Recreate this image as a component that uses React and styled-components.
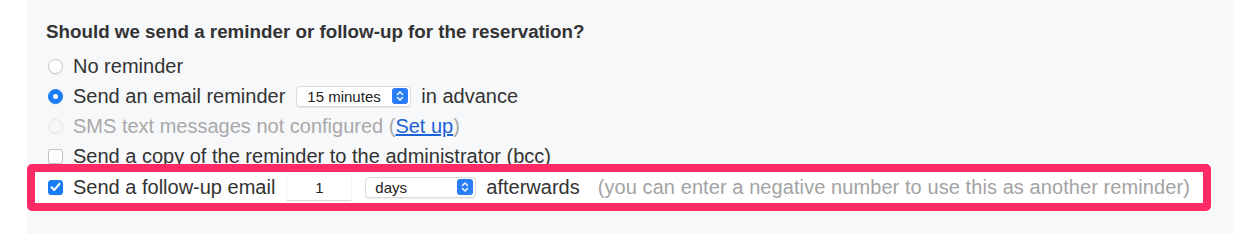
import React from "react";
import styled, { createGlobalStyle } from "styled-components";

const GlobalStyle = createGlobalStyle`
  html, body {
    margin: 0;
    padding: 0;
    background: #ffffff;
  }
  body {
    font-family: "Liberation Sans", Arial, Helvetica, sans-serif;
    color: #333333;
  }
`;

const Panel = styled.div`
  margin-left: 27px;
  height: 234px;
  box-sizing: border-box;
  background: #f7f8fa;
  padding: 20px 0 0 19px;
`;

const Heading = styled.h3`
  margin: 0 0 7px;
  font-size: 18.8px;
  line-height: 24px;
  font-weight: bold;
  color: #333;
`;

const Row = styled.div`
  display: flex;
  align-items: center;
  height: 30px;
  padding-left: 2px;
  font-size: 20px;
  color: ${(p) => (p.disabled ? "#a9a9a9" : "#333")};
  white-space: nowrap;
`;

const Highlight = styled.div`
  position: relative;
  margin: -7px 0 0 -19px;
  width: 1184px;
  height: 47px;
  box-sizing: border-box;
  border: 8px solid #fd2a66;
  border-radius: 5px;
  background: #ffffff;
  padding-left: 11px;
`;

const Label = styled.span`
  margin-left: 10px;
`;

const Radio = styled.span`
  width: 15px;
  height: 15px;
  box-sizing: border-box;
  border-radius: 50%;
  flex: none;
  display: flex;
  align-items: center;
  justify-content: center;
  border: 1px solid ${(p) => (p.checked ? "#1a7cf5" : p.disabled ? "#e4e4e6" : "#c6c6c8")};
  background: ${(p) => (p.checked ? "#1a7cf5" : p.disabled ? "#f7f7f8" : "#fff")};
  box-shadow: ${(p) => (p.disabled ? "none" : "0 1px 1px rgba(0,0,0,0.06)")};
  &::after {
    content: "";
    display: ${(p) => (p.checked ? "block" : "none")};
    width: 5px;
    height: 5px;
    border-radius: 50%;
    background: #fff;
  }
`;

const Check = styled.span`
  width: 15px;
  height: 15px;
  box-sizing: border-box;
  border-radius: 3px;
  flex: none;
  display: flex;
  align-items: center;
  justify-content: center;
  border: 1px solid ${(p) => (p.checked ? "#1a7cf5" : "#c3c3c5")};
  background: ${(p) => (p.checked ? "#1a7cf5" : "#fff")};
  box-shadow: 0 1px 1px rgba(0, 0, 0, 0.06);
`;

const Select = styled.span`
  display: inline-flex;
  align-items: center;
  justify-content: space-between;
  box-sizing: border-box;
  width: ${(p) => p.w}px;
  height: 21px;
  margin: 0 10px 0 ${(p) => p.ml}px;
  padding: 0 2px 0 ${(p) => p.pl}px;
  background: #fff;
  border: 1px solid #dcdcde;
  border-radius: 4px;
  box-shadow: 0 1px 1px rgba(0, 0, 0, 0.08);
  font-size: 15px;
  color: #222;
`;

const Stepper = styled.span`
  width: 16px;
  height: 16px;
  border-radius: 3px;
  background: #2a7ff6;
  display: flex;
  align-items: center;
  justify-content: center;
`;

const NumberBox = styled.span`
  display: inline-flex;
  align-items: center;
  justify-content: center;
  width: 64px;
  height: 25px;
  margin-left: 12px;
  background: #fff;
  box-shadow: 0 1px 1px rgba(0, 0, 0, 0.12), 0 0 0 1px rgba(0, 0, 0, 0.03);
  font-size: 15px;
  color: #222;
`;

const Hint = styled.span`
  margin-left: 18px;
  color: #a3a3a3;
  font-size: 20px;
  letter-spacing: 0.08px;
`;

const Link = styled.a`
  color: #1a63d6;
  text-decoration: underline;
`;

const Arrows = () => (
  <svg width="8" height="12" viewBox="0 0 8 12">
    <path d="M1.5 4.5 L4 2 L6.5 4.5 M1.5 7.5 L4 10 L6.5 7.5" fill="none" stroke="#fff" strokeWidth="1.4" strokeLinecap="round" strokeLinejoin="round" />
  </svg>
);

const CheckMark = () => (
  <svg width="11" height="10" viewBox="0 0 11 10">
    <path d="M1.5 5.2 L4.2 8 L9.5 1.8" fill="none" stroke="#fff" strokeWidth="2" strokeLinecap="round" strokeLinejoin="round" />
  </svg>
);

export default function App() {
  return (
    <>
      <GlobalStyle />
      <Panel>
        <Heading>Should we send a reminder or follow-up for the reservation?</Heading>
        <Row>
          <Radio />
          <Label>No reminder</Label>
        </Row>
        <Row>
          <Radio checked />
          <Label>Send an email reminder</Label>
          <Select w={115} ml={11} pl={10}>
            15 minutes
            <Stepper>
              <Arrows />
            </Stepper>
          </Select>
          <span>in advance</span>
        </Row>
        <Row disabled>
          <Radio disabled />
          <Label>
            SMS text messages not configured (<Link href="#">Set up</Link>)
          </Label>
        </Row>
        <Row>
          <Check />
          <Label>Send a copy of the reminder to the administrator (bcc)</Label>
        </Row>
        <Highlight>
          <Row>
            <Check checked>
              <CheckMark />
            </Check>
            <Label>Send a follow-up email</Label>
            <NumberBox>1</NumberBox>
            <Select w={111} ml={14} pl={9}>
              days
              <Stepper>
                <Arrows />
              </Stepper>
            </Select>
            <span>afterwards</span>
            <Hint>(you can enter a negative number to use this as another reminder)</Hint>
          </Row>
        </Highlight>
      </Panel>
    </>
  );
}
